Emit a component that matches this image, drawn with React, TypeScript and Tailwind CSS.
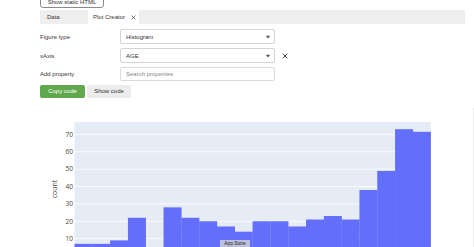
import React from "react";

const counts = [7, 7, 9, 22, 0, 28, 22, 20, 17, 14, 20, 20, 17, 21, 23, 21, 38, 49, 73, 71.5];

function Caret() {
  return (
    <svg width="6" height="4" viewBox="0 0 6 4" className="block">
      <path d="M0.8 0.8 L5.2 0.8 L3 3.4 Z" fill="#555" />
    </svg>
  );
}

function Cross({ size = 6, stroke = 1 }: { size?: number; stroke?: number }) {
  return (
    <svg width={size} height={size} viewBox="0 0 6 6" className="block">
      <path d="M1 1 L5 5 M5 1 L1 5" stroke="#333" strokeWidth={stroke} strokeLinecap="round" />
    </svg>
  );
}

function Chart() {
  const left = 74.5;
  const right = 430.7;
  const top = 12;
  const zeroY = 146;
  const k = 1.737;
  const bw = (right - left) / 20;
  const ticks = [10, 20, 30, 40, 50, 60, 70];
  return (
    <svg width="474" height="137" viewBox="0 0 474 137" className="block">
      <rect x={left} y={top} width={right - left} height={140} fill="#e5ecf6" />
      {ticks.map((t) => (
        <line key={t} x1={left} x2={right} y1={zeroY - t * k} y2={zeroY - t * k} stroke="#ffffff" strokeWidth="0.8" />
      ))}
      {counts.map((c, i) =>
        c > 0 ? (
          <rect key={i} x={left + i * bw} y={zeroY - c * k} width={bw + 0.2} height={c * k + 10} fill="#636efa" />
        ) : null
      )}
      {ticks.map((t) => (
        <text
          key={"l" + t}
          x={73}
          y={zeroY - t * k + 2.3}
          textAnchor="end"
          fontSize="6.6"
          fill="#444"
          fontFamily="'Open Sans', 'Liberation Sans', sans-serif"
        >
          {t}
        </text>
      ))}
      <text
        x={0}
        y={0}
        transform="translate(56.5 79) rotate(-90)"
        textAnchor="middle"
        fontSize="7"
        fill="#444"
        fontFamily="'Open Sans', 'Liberation Sans', sans-serif"
      >
        count
      </text>
    </svg>
  );
}

export default function App() {
  return (
    <div className="relative w-[474px] h-[247px] overflow-hidden bg-white font-['Liberation_Sans',Arial,sans-serif] text-[#333]">
      <div className="pl-[40px] pr-[9px]">
        <button className="mt-[-9px] h-[17px] w-[64px] border border-[#8a8a8a] rounded-[3px] bg-white text-[6px] text-[#333] flex items-end justify-center pb-[2px] leading-none">
          Show static HTML
        </button>
        <div className="mt-[2px] h-[14px] bg-[#eeeeee] flex text-[6px] leading-none">
          <div className="w-[48px] pl-[7px] flex items-center">Data</div>
          <div className="w-[51px] bg-white pl-[5px] flex items-center gap-[6px]">
            <span>Plot Creator</span>
            <Cross size={5} stroke={0.8} />
          </div>
        </div>
        <div className="mt-[5px] flex flex-col gap-[4px] text-[6px] leading-none">
          <div className="flex items-center h-[15px]">
            <div className="w-[80px]">Figure type</div>
            <div className="w-[155px] h-[15px] border border-[#d4d4d4] rounded-[2px] flex items-center justify-between pl-[5px] pr-[3px]">
              <span>Histogram</span>
              <Caret />
            </div>
          </div>
          <div className="flex items-center h-[15px]">
            <div className="w-[80px]">xAxis</div>
            <div className="w-[155px] h-[15px] border border-[#d4d4d4] rounded-[2px] flex items-center justify-between pl-[5px] pr-[3px]">
              <span>AGE</span>
              <Caret />
            </div>
            <div className="ml-[7px]">
              <Cross size={6} stroke={0.9} />
            </div>
          </div>
          <div className="flex items-center h-[14px]">
            <div className="w-[80px]">Add property</div>
            <div className="w-[155px] h-[14px] border border-[#dcdcdc] rounded-[2px] flex items-center pl-[5px] text-[#888]">
              Search properties
            </div>
          </div>
        </div>
        <div className="mt-[4px] flex gap-[2px] text-[6px] leading-none">
          <div className="w-[45px] h-[12.5px] bg-[#5fa84c] text-white rounded-[2px] flex items-center justify-center">
            Copy code
          </div>
          <div className="w-[44px] h-[12.5px] bg-[#ececec] rounded-[2px] flex items-center justify-center">
            Show code
          </div>
        </div>
      </div>
      <div className="mt-[12.5px]">
        <Chart />
      </div>
      <div className="absolute left-[220px] top-[240px] w-[30px] h-[9px] bg-[#bcc0da] rounded-[1px] flex items-start justify-center pt-[1.5px] text-[4.8px] leading-none text-[#222]">
        App Store
      </div>
      <div className="absolute right-0 top-[108px] w-[1px] h-[139px] bg-[#ececec]" />
    </div>
  );
}
